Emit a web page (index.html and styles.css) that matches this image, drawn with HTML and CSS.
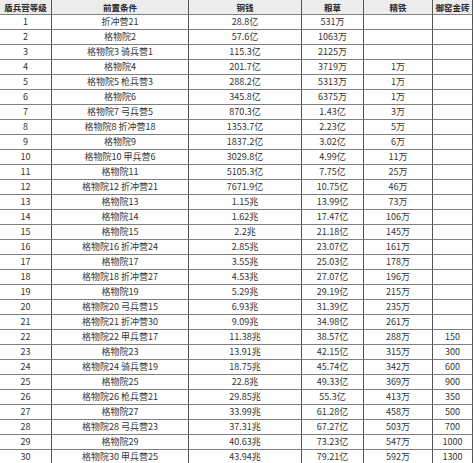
FILE: index.html
```html
<!DOCTYPE html>
<html lang="zh">
<head>
<meta charset="utf-8">
<link rel="stylesheet" href="styles.css">
</head>
<body>
<div class="sheet">
  <div class="row head"><div>盾兵营等级</div><div>前置条件</div><div>铜钱</div><div>粮草</div><div>精铁</div><div>御窑金砖</div></div>
  <div class="row"><div>1</div><div>折冲营21</div><div>28.8亿</div><div>531万</div><div></div><div></div></div>
  <div class="row"><div>2</div><div>格物院2</div><div>57.6亿</div><div>1063万</div><div></div><div></div></div>
  <div class="row"><div>3</div><div>格物院3 骑兵营1</div><div>115.3亿</div><div>2125万</div><div></div><div></div></div>
  <div class="row"><div>4</div><div>格物院4</div><div>201.7亿</div><div>3719万</div><div>1万</div><div></div></div>
  <div class="row"><div>5</div><div>格物院5 枪兵营3</div><div>288.2亿</div><div>5313万</div><div>1万</div><div></div></div>
  <div class="row"><div>6</div><div>格物院6</div><div>345.8亿</div><div>6375万</div><div>1万</div><div></div></div>
  <div class="row"><div>7</div><div>格物院7 弓兵营5</div><div>870.3亿</div><div>1.43亿</div><div>3万</div><div></div></div>
  <div class="row"><div>8</div><div>格物院8 折冲营18</div><div>1353.7亿</div><div>2.23亿</div><div>5万</div><div></div></div>
  <div class="row"><div>9</div><div>格物院9</div><div>1837.2亿</div><div>3.02亿</div><div>6万</div><div></div></div>
  <div class="row"><div>10</div><div>格物院10 甲兵营6</div><div>3029.8亿</div><div>4.99亿</div><div>11万</div><div></div></div>
  <div class="row"><div>11</div><div>格物院11</div><div>5105.3亿</div><div>7.75亿</div><div>25万</div><div></div></div>
  <div class="row"><div>12</div><div>格物院12 折冲营21</div><div>7671.9亿</div><div>10.75亿</div><div>46万</div><div></div></div>
  <div class="row"><div>13</div><div>格物院13</div><div>1.15兆</div><div>13.99亿</div><div>73万</div><div></div></div>
  <div class="row"><div>14</div><div>格物院14</div><div>1.62兆</div><div>17.47亿</div><div>106万</div><div></div></div>
  <div class="row"><div>15</div><div>格物院15</div><div>2.2兆</div><div>21.18亿</div><div>145万</div><div></div></div>
  <div class="row"><div>16</div><div>格物院16 折冲营24</div><div>2.85兆</div><div>23.07亿</div><div>161万</div><div></div></div>
  <div class="row"><div>17</div><div>格物院17</div><div>3.55兆</div><div>25.03亿</div><div>178万</div><div></div></div>
  <div class="row"><div>18</div><div>格物院18 折冲营27</div><div>4.53兆</div><div>27.07亿</div><div>196万</div><div></div></div>
  <div class="row"><div>19</div><div>格物院19</div><div>5.29兆</div><div>29.19亿</div><div>215万</div><div></div></div>
  <div class="row"><div>20</div><div>格物院20 弓兵营15</div><div>6.93兆</div><div>31.39亿</div><div>235万</div><div></div></div>
  <div class="row"><div>21</div><div>格物院21 折冲营30</div><div>9.09兆</div><div>34.98亿</div><div>261万</div><div></div></div>
  <div class="row"><div>22</div><div>格物院22 甲兵营17</div><div>11.38兆</div><div>38.57亿</div><div>288万</div><div>150</div></div>
  <div class="row"><div>23</div><div>格物院23</div><div>13.91兆</div><div>42.15亿</div><div>315万</div><div>300</div></div>
  <div class="row"><div>24</div><div>格物院24 骑兵营19</div><div>18.75兆</div><div>45.74亿</div><div>342万</div><div>600</div></div>
  <div class="row"><div>25</div><div>格物院25</div><div>22.8兆</div><div>49.33亿</div><div>369万</div><div>900</div></div>
  <div class="row"><div>26</div><div>格物院26 枪兵营21</div><div>29.85兆</div><div>55.3亿</div><div>413万</div><div>350</div></div>
  <div class="row"><div>27</div><div>格物院27</div><div>33.99兆</div><div>61.28亿</div><div>458万</div><div>500</div></div>
  <div class="row"><div>28</div><div>格物院28 弓兵营23</div><div>37.31兆</div><div>67.27亿</div><div>503万</div><div>700</div></div>
  <div class="row"><div>29</div><div>格物院29</div><div>40.63兆</div><div>73.23亿</div><div>547万</div><div>1000</div></div>
  <div class="row"><div>30</div><div>格物院30 甲兵营25</div><div>43.94兆</div><div>79.21亿</div><div>592万</div><div>1300</div></div>
</div>
</body>
</html>
```
FILE: styles.css
```css
html, body {
  margin: 0;
  padding: 0;
  background: #ffffff;
}
.sheet {
  width: 473px;
  font-family: "Noto Sans CJK SC", "Noto Sans", sans-serif;
  font-size: 9px;
  color: #333333;
}
.row {
  display: grid;
  grid-template-columns: 52px 137px 113px 62px 69px 40px;
  height: 15px;
}
.row > div {
  box-sizing: border-box;
  border-right: 1px solid #555555;
  border-bottom: 1px solid #808080;
  text-align: center;
  line-height: 14px;
  white-space: nowrap;
  overflow: hidden;
}
.head > div {
  background: #ececec;
  font-weight: bold;
  font-size: 8.5px;
  color: #2a2a2a;
}
```
